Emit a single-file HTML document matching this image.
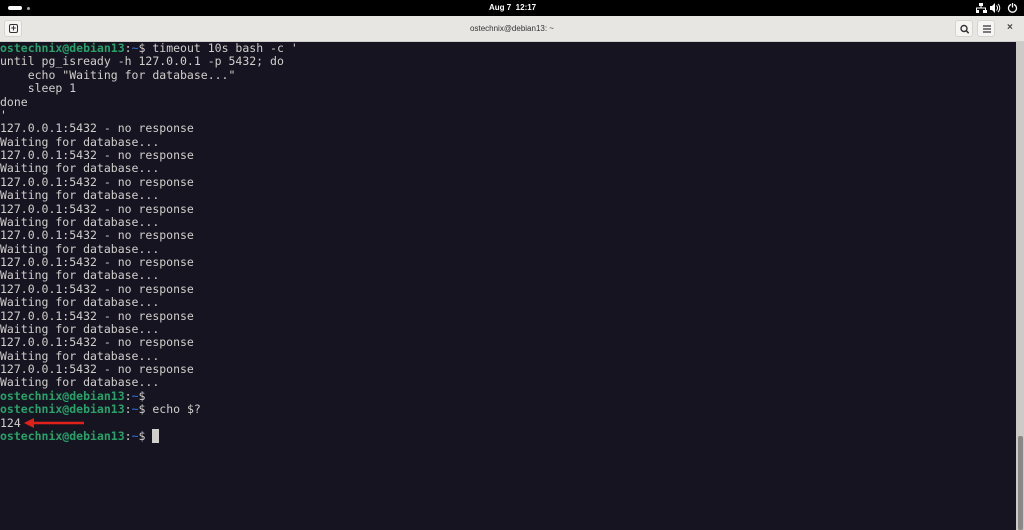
<!DOCTYPE html>
<html><head><style>
*{margin:0;padding:0;box-sizing:border-box}
body{width:1024px;height:530px;overflow:hidden;background:#171421;font-family:"Liberation Sans",sans-serif;position:relative}
#top{position:absolute;left:0;top:0;width:1024px;height:16px;background:#000;color:#fff;font-size:8px;font-weight:bold}
#bar{position:absolute;left:0;top:16px;width:1024px;height:26px;background:#e8e6e3;border-bottom:1px solid #cfcdca}
.btn{position:absolute;top:4px;width:18px;height:17px;background:#f6f5f4;border:1px solid #d6d4d1;border-radius:3px}
#term{position:absolute;left:0;top:42px;width:1016px;height:488px;background:#171421}
pre{position:absolute;left:0;top:42px;font-family:"DejaVu Sans Mono","Liberation Mono",monospace;font-size:11.5px;line-height:13.38px;color:#d0cfcc}
.g{color:#26a269;font-weight:bold}.b{color:#2a7bde}
#sb{position:absolute;left:1016px;top:42px;width:8px;height:488px;background:#cdcbc8}
#th{position:absolute;left:1018px;top:436px;width:5px;height:94px;background:#8a8886;border-radius:2px}
</style></head><body>
<div id="top">
<div style="position:absolute;left:8px;top:6px;width:14px;height:4px;border-radius:2px;background:#fff"></div>
<div style="position:absolute;left:27px;top:7px;width:3px;height:3px;border-radius:2px;background:#aaa"></div>
<div style="position:absolute;left:489px;top:3px">Aug 7&nbsp;&nbsp;12:17</div>
<svg style="position:absolute;left:976px;top:3px" width="44" height="10" viewBox="0 0 44 10"><g fill="#fff"><rect x="3" y="0" width="4" height="3"/><rect x="4.5" y="3" width="1" height="2"/><rect x="0" y="4.5" width="10" height="1"/><rect x="0" y="5" width="1" height="2"/><rect x="9" y="5" width="1" height="2"/><rect x="-1" y="7" width="4" height="3"/><rect x="7" y="7" width="4" height="3"/><path d="M14 3h2l3-3v10l-3-3h-2z"/><path d="M20.5 2.5a3.5 3.5 0 0 1 0 5" stroke="#fff" fill="none"/><path d="M22 1a5.5 5.5 0 0 1 0 8" stroke="#fff" fill="none"/></g><path d="M35 1.5a4 4 0 1 0 3 0M36.5 0v4.5" stroke="#fff" stroke-width="1.3" fill="none"/></svg>
</div>
<div id="bar">
<div class="btn" style="left:4px"><div style="position:absolute;left:4px;top:3px;width:9px;height:9px;border:1.2px solid #333;border-radius:2px;font-size:9px;line-height:6px;text-align:center;color:#333;font-weight:bold">+</div></div>
<div style="position:absolute;left:0;width:1024px;top:8px;text-align:center;font-size:8px;color:#333">ostechnix@debian13: ~</div>
<div class="btn" style="left:955px"><svg width="18" height="17"><circle cx="8" cy="7.5" r="3" stroke="#333" stroke-width="1.4" fill="none"/><path d="M10.2 9.7l2.5 2.5" stroke="#333" stroke-width="1.5"/></svg></div>
<div class="btn" style="left:977px"><svg width="18" height="17"><path d="M5 5h8M5 8h8M5 11h8" stroke="#333" stroke-width="1.3"/></svg></div>
<div style="position:absolute;left:1007px;top:6px;font-size:10px;color:#444;font-weight:bold">×</div>
</div>
<div id="term"></div>
<pre><span class="g">ostechnix@debian13</span>:<span class="b">~</span>$ timeout 10s bash -c '
until pg_isready -h 127.0.0.1 -p 5432; do
    echo "Waiting for database..."
    sleep 1
done
'
127.0.0.1:5432 - no response
Waiting for database...
127.0.0.1:5432 - no response
Waiting for database...
127.0.0.1:5432 - no response
Waiting for database...
127.0.0.1:5432 - no response
Waiting for database...
127.0.0.1:5432 - no response
Waiting for database...
127.0.0.1:5432 - no response
Waiting for database...
127.0.0.1:5432 - no response
Waiting for database...
127.0.0.1:5432 - no response
Waiting for database...
127.0.0.1:5432 - no response
Waiting for database...
127.0.0.1:5432 - no response
Waiting for database...
<span class="g">ostechnix@debian13</span>:<span class="b">~</span>$
<span class="g">ostechnix@debian13</span>:<span class="b">~</span>$ echo $?
124
<span class="g">ostechnix@debian13</span>:<span class="b">~</span>$ <span style="background:#d0cfcc">&nbsp;</span></pre>
<svg style="position:absolute;left:22px;top:417px" width="64" height="12"><path d="M62 6H10" stroke="#e0201b" stroke-width="2.5"/><path d="M2 6l10-5v10z" fill="#e0201b"/></svg>
<div id="sb"></div><div id="th"></div>
</body></html>
